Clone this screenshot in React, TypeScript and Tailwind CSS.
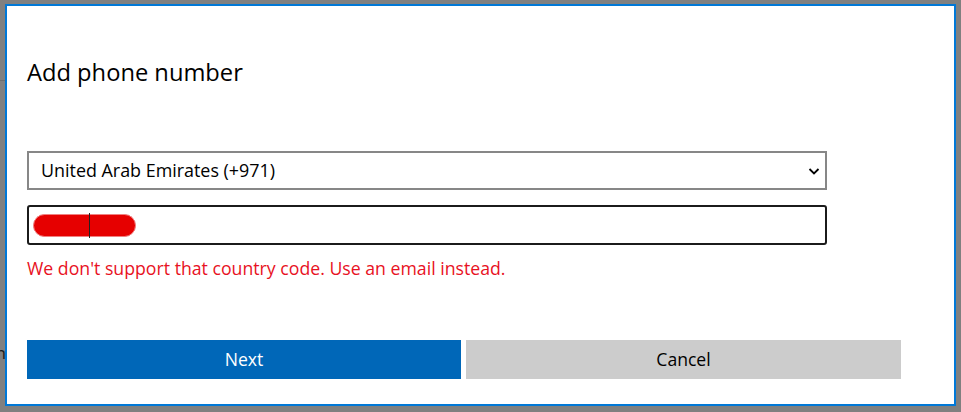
import React from "react";

export default function App() {
  const font = { fontFamily: '"Open Sans", "Noto Sans", sans-serif' };
  return (
    <div className="w-[961px] h-[412px] bg-[#808080] flex overflow-hidden" style={font}>
      <div className="w-[5px] shrink-0 flex flex-col overflow-hidden">
        <div className="h-[80px]" />
        <div className="h-px bg-[#6e6e6e]" />
        <div className="h-[262px]" />
        <div className="flex justify-end text-[17px] leading-[20px] text-[#1a1a1a] w-[5px]">
          <span className="-mr-[1px]">n</span>
        </div>
      </div>
      <div className="mt-[4px] w-[951px] h-[402px] shrink-0 border-2 border-[#0078d7] bg-white flex flex-col pl-[20px]">
        <h1 className="mt-[50px] text-[23.7px] leading-[32px] text-black">Add phone number</h1>
        <div className="mt-[63px] w-[800px] h-[39px] border-2 border-[#878787] flex items-center justify-between pl-[12px] pr-[4px]">
          <span className="text-[17.9px] text-black">United Arab Emirates (+971)</span>
          <svg width="14" height="10" viewBox="0 0 14 10">
            <path d="M2.5 3 L7 7.5 L11.5 3" fill="none" stroke="#000" strokeWidth="1.8" />
          </svg>
        </div>
        <div className="mt-[15px] w-[800px] h-[40px] border-2 border-[#1b1b1b] rounded-[3px] flex items-center pl-[4px]">
          <div className="relative w-[103px] h-[23px] rounded-full bg-[#e60000] border border-[#f08080]">
            <div className="absolute left-[55px] -top-[2px] w-px h-[25px] bg-[#222]" />
          </div>
        </div>
        <p className="mt-[11px] text-[17.7px] leading-[24px] text-[#e81123]">
          We don't support that country code. Use an email instead.
        </p>
        <div className="mt-[60px] flex gap-[5px]">
          <button className="w-[434px] h-[39px] bg-[#0067b8] text-white text-[17.6px]">Next</button>
          <button className="w-[435px] h-[39px] bg-[#cccccc] text-black text-[17.6px]">Cancel</button>
        </div>
      </div>
    </div>
  );
}
